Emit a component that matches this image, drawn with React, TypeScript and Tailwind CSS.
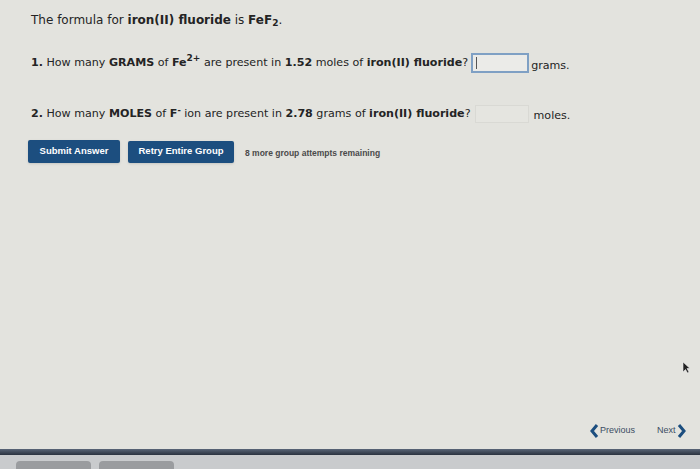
export default function App() {
  return (
    <div
      className="relative w-[700px] h-[469px] overflow-hidden bg-[#e3e3de] text-[#242424]"
      style={{ fontFamily: '"DejaVu Sans", Verdana, sans-serif' }}
    >
      <div className="flex flex-col pl-[31px] pt-[11px]">
        <p className="text-[12px] leading-[18px]">
          The formula for <b>iron(II) fluoride</b> is <b>FeF<sub className="text-[9px]">2</sub></b>.
        </p>

        <div className="flex items-center mt-[23px] h-[22px] text-[11.1px]">
          <span>
            <b>1.</b> How many <b>GRAMS</b> of <b>Fe<sup className="text-[9px]">2+</sup></b> are present in{' '}
            <b>1.52</b> moles of <b>iron(II) fluoride</b>?
          </span>
          <div className="ml-[3px] w-[58px] h-[20px] border-2 border-[#7fa0c4] bg-[#ebebe8] flex items-center pl-[3px]">
            <div className="w-px h-[12px] bg-[#555]" />
          </div>
          <span className="ml-[2px] mt-[6px]">grams.</span>
        </div>

        <div className="flex items-center mt-[29px] h-[22px] text-[11.1px]">
          <span>
            <b>2.</b> How many <b>MOLES</b> of <b>F<sup className="text-[8px]">-</sup></b> ion are present in{' '}
            <b>2.78</b> grams of <b>iron(II) fluoride</b>?
          </span>
          <div className="ml-[4px] w-[54px] h-[18px] border border-[#d9d9d4] bg-[#e5e5e0]" />
          <span className="ml-[5px] mt-[4px]">moles.</span>
        </div>

        <div
          className="flex items-center mt-[15px] -ml-[3px]"
          style={{ fontFamily: '"Liberation Sans", Arial, sans-serif' }}
        >
          <button className="w-[92px] h-[23px] bg-[#1c4e7f] rounded-[2px] text-white text-[9.5px] font-bold shadow-sm">
            Submit Answer
          </button>
          <button className="ml-[8px] w-[106px] h-[22px] bg-[#1c4e7f] rounded-[2px] text-white text-[9.5px] font-bold shadow-sm">
            Retry Entire Group
          </button>
          <span className="ml-[11px] mt-[4px] text-[8.5px] font-bold text-[#4a4a4a]">
            8 more group attempts remaining
          </span>
        </div>
      </div>

      <svg className="absolute left-[682px] top-[361px]" width="9" height="13" viewBox="0 0 9 13">
        <path d="M1 1 L1 11 L3.5 8.5 L5.5 12 L7 11 L5 7.5 L8 7.5 Z" fill="#222" stroke="#eee" strokeWidth="0.6" />
      </svg>

      <div
        className="absolute left-[590px] top-[424px] flex items-center text-[9px] text-[#3c4d63]"
        style={{ fontFamily: '"Liberation Sans", Arial, sans-serif' }}
      >
        <svg width="9" height="14" viewBox="0 0 9 14">
          <path d="M7 1 L2 7 L7 13" fill="none" stroke="#1c4e7f" strokeWidth="3" />
        </svg>
        <span className="ml-[1px]">Previous</span>
        <span className="ml-[22px]">Next</span>
        <svg className="ml-[1px]" width="9" height="14" viewBox="0 0 9 14">
          <path d="M2 1 L7 7 L2 13" fill="none" stroke="#1c4e7f" strokeWidth="3" />
        </svg>
      </div>

      <div className="absolute left-0 right-0 top-[449px] h-[6px] bg-gradient-to-b from-[#5a6678] to-[#2b3340]" />
      <div className="absolute left-0 right-0 top-[455px] bottom-0 bg-[#c9cbcd] flex gap-[8px] px-[16px] pt-[6px]">
        <div className="w-[75px] h-[10px] rounded-t bg-[#9a9c9f]" />
        <div className="w-[75px] h-[10px] rounded-t bg-[#9a9c9f]" />
      </div>
    </div>
  );
}
